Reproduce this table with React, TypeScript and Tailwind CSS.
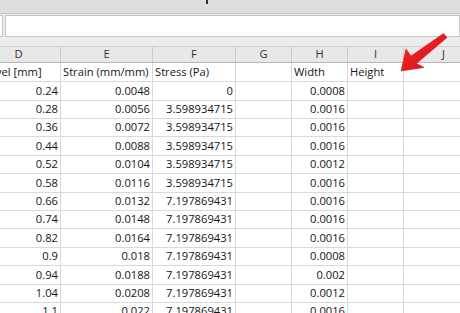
import React from "react";

const widths = [84, 92, 83, 56, 56, 56, 80];
const letters = ["D", "E", "F", "G", "H", "I", "J"];

const D = ["0.24","0.28","0.36","0.44","0.52","0.58","0.66","0.74","0.82","0.9","0.94","1.04","1.1"];
const E = ["0.0048","0.0056","0.0072","0.0088","0.0104","0.0116","0.0132","0.0148","0.0164","0.018","0.0188","0.0208","0.022"];
const F = ["0","3.598934715","3.598934715","3.598934715","3.598934715","3.598934715","7.197869431","7.197869431","7.197869431","7.197869431","7.197869431","7.197869431","7.197869431"];
const H = ["0.0008","0.0016","0.0016","0.0016","0.0012","0.0016","0.0016","0.0016","0.0016","0.0008","0.002","0.0012","0.0016"];

const font = { fontFamily: '"Open Sans", sans-serif' };

function Cell({ w, children, right, left, h }: { w: number; children?: React.ReactNode; right?: boolean; left?: boolean; h: string }) {
  return (
    <div
      className={`shrink-0 flex items-center border-r border-b border-[#d9d9d9] px-[2px] whitespace-nowrap overflow-hidden ${h} ${right ? "justify-end" : left ? "justify-start" : "justify-center"}`}
      style={{ width: w }}
    >
      {children}
    </div>
  );
}

export default function App() {
  return (
    <div className="relative w-[460px] h-[313px] overflow-hidden bg-white text-[11.2px] text-[#151515]" style={font}>
      {/* top band */}
      <div className="h-[14px] bg-[#dedede] border-b border-[#c9c9c9] relative">
        <div className="absolute left-[206px] top-0 w-[2px] h-[4px] bg-[#333]" />
      </div>
      {/* formula bar */}
      <div className="h-[33px] bg-[#ededed] flex items-start pt-[1px] border-b border-[#d2d2d2]">
        <div className="w-[3px] h-[22px] bg-white border-r border-y border-[#c6c6c6]" />
        <div className="ml-[2px] flex-1 h-[22px] bg-white border border-[#c6c6c6]" />
      </div>
      {/* grid */}
      <div className="ml-[-23px]">
        <div className="flex bg-[#e8e8e8] border-b border-[#b7b7b7] text-[#333]">
          {letters.map((l, i) => (
            <div
              key={l}
              className="shrink-0 h-[15px] flex items-center justify-center border-r border-[#cbcbcb]"
              style={{ width: widths[i] }}
            >
              {l}
            </div>
          ))}
        </div>
        <div className="flex">
          <Cell w={84} h="h-[19.3px]" left>
            <span>Travel [mm]</span>
          </Cell>
          <Cell w={92} h="h-[19.3px]" left>Strain (mm/mm)</Cell>
          <Cell w={83} h="h-[19.3px]" left>Stress (Pa)</Cell>
          <Cell w={56} h="h-[19.3px]" />
          <Cell w={56} h="h-[19.3px]" left>Width</Cell>
          <Cell w={56} h="h-[19.3px]" left>Height</Cell>
          <Cell w={80} h="h-[19.3px]" />
        </div>
        {D.map((d, r) => (
          <div className="flex" key={r}>
            <Cell w={84} h="h-[18.4px]" right>{d}</Cell>
            <Cell w={92} h="h-[18.4px]" right>{E[r]}</Cell>
            <Cell w={83} h="h-[18.4px]" right>{F[r]}</Cell>
            <Cell w={56} h="h-[18.4px]" />
            <Cell w={56} h="h-[18.4px]" right>{H[r]}</Cell>
            <Cell w={56} h="h-[18.4px]" />
            <Cell w={80} h="h-[18.4px]" />
          </div>
        ))}
      </div>
      {/* red arrow */}
      <svg className="absolute left-0 top-0" width="460" height="313" viewBox="0 0 460 313">
        <defs>
          <linearGradient id="ag" x1="0" y1="0" x2="1" y2="1">
            <stop offset="0" stopColor="#f22a2f" />
            <stop offset="1" stopColor="#d40e15" />
          </linearGradient>
        </defs>
        <polygon
          points="401,71 406,49 411,56 443.5,33.5 447,37.5 416.5,63.5 424,67.5"
          fill="url(#ag)"
          stroke="#e0161c"
          strokeWidth="0.6"
          strokeLinejoin="round"
        />
      </svg>
    </div>
  );
}
